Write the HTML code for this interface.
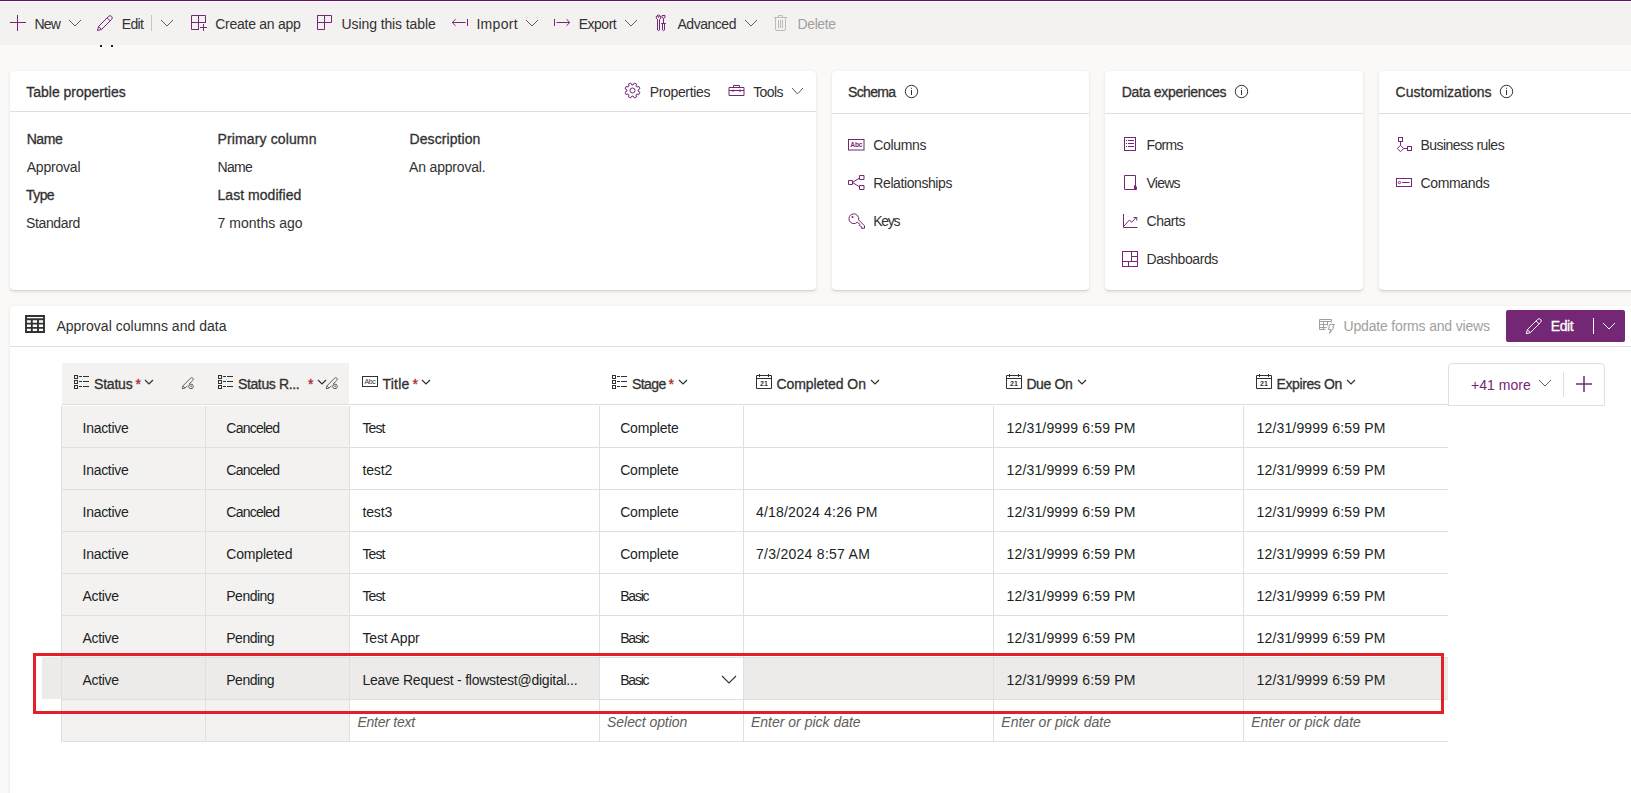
<!DOCTYPE html>
<html><head><meta charset="utf-8"><style>
html,body{margin:0;padding:0}
body{width:1631px;height:793px;overflow:hidden;position:relative;background:#faf9f8;font-family:"Liberation Sans",sans-serif;font-size:14px;color:#323130}
.t{position:absolute;line-height:16px;white-space:nowrap}
.r{position:absolute}
.i{position:absolute;overflow:visible}
.card{position:absolute;background:#fff;border-radius:4px;box-shadow:0 1.6px 3.6px rgba(0,0,0,.10),0 .3px .9px rgba(0,0,0,.08)}
</style></head><body>
<div class="r" style="left:0px;top:0px;width:1631px;height:1px;background:#661166;"></div>
<div class="r" style="left:0px;top:1px;width:1631px;height:1px;background:#fbfcfb;"></div>
<div class="r" style="left:0px;top:2px;width:1631px;height:43px;background:#f3f2f1;"></div>
<div class="r" style="left:100px;top:45px;width:2px;height:2px;background:#201f1e;"></div>
<div class="r" style="left:111px;top:45px;width:2px;height:2px;background:#201f1e;"></div>
<svg class="i" style="left:10px;top:14px" width="16" height="17" viewBox="0 0 16 17" fill="none" stroke="#742774" stroke-width="1"><path d="M0 8.5 H16 M7.5 1 V17"/></svg>
<div class="t" style="left:34.40px;top:16px;letter-spacing:-0.75px;">New</div>
<svg class="i" style="left:68px;top:19px" width="14" height="8" viewBox="0 0 14 8" fill="none" stroke="#605e5c" stroke-width="1"><path d="M1 1 L7.0 7 L13 1"/></svg>
<svg class="i" style="left:96px;top:14px" width="18" height="18" viewBox="0 0 18 18" fill="none" stroke="#742774" stroke-width="1"><path d="M1.5 16.5 L2.6 12.4 L12.6 2.4 A2.05 2.05 0 0 1 15.6 5.4 L5.6 15.4 Z M11.1 3.9 L14.1 6.9 M2.6 12.4 L5.6 15.4"/></svg>
<div class="t" style="left:121.80px;top:16px;letter-spacing:-0.667px;">Edit</div>
<div class="r" style="left:151px;top:15px;width:1px;height:16px;background:#c8c6c4;"></div>
<svg class="i" style="left:160px;top:19px" width="14" height="8" viewBox="0 0 14 8" fill="none" stroke="#605e5c" stroke-width="1"><path d="M1 1 L7.0 7 L13 1"/></svg>
<svg class="i" style="left:190px;top:14px" width="18" height="18" viewBox="0 0 18 18" fill="none" stroke="#742774" stroke-width="1"><path d="M1.5 1.5 H15.5 V9 M1.5 1.5 V15.5 H9 M8.5 1.5 V15.5 M1.5 8.5 H15.5 M10 13.5 H17 M13.5 10 V17"/></svg>
<div class="t" style="left:215.20px;top:16px;letter-spacing:-0.258px;">Create an app</div>
<svg class="i" style="left:316px;top:14px" width="18" height="18" viewBox="0 0 18 18" fill="none" stroke="#742774" stroke-width="1"><path d="M1.5 1.5 H15.5 V8.5 H1.5 Z M1.5 1.5 V15.5 H8.5 V1.5"/></svg>
<div class="t" style="left:341.60px;top:16px;letter-spacing:-0.107px;">Using this table</div>
<svg class="i" style="left:451px;top:17px" width="19" height="11" viewBox="0 0 19 11" fill="none" stroke="#742774" stroke-width="1"><path d="M1.5 5.5 H14.5 M4.6 2.2 L1.2 5.5 L4.6 8.8 M16.5 2 V9"/></svg>
<div class="t" style="left:476.40px;top:16px;letter-spacing:0.3px;">Import</div>
<svg class="i" style="left:525px;top:19px" width="14" height="8" viewBox="0 0 14 8" fill="none" stroke="#605e5c" stroke-width="1"><path d="M1 1 L7.0 7 L13 1"/></svg>
<svg class="i" style="left:553px;top:17px" width="19" height="11" viewBox="0 0 19 11" fill="none" stroke="#742774" stroke-width="1"><path d="M1.5 2 V9 M3.5 5.5 H16.5 M13.4 2.2 L16.8 5.5 L13.4 8.8"/></svg>
<div class="t" style="left:578.70px;top:16px;letter-spacing:-0.48px;">Export</div>
<svg class="i" style="left:624px;top:19px" width="14" height="8" viewBox="0 0 14 8" fill="none" stroke="#605e5c" stroke-width="1"><path d="M1 1 L7.0 7 L13 1"/></svg>
<svg class="i" style="left:654px;top:14px" width="14" height="18" viewBox="0 0 14 18" fill="none" stroke="#742774" stroke-width="1"><path d="M3.5 16 V5.5 M5.5 16 V5.5 M3.5 16 Q4.5 17.3 5.5 16 M3.5 5.5 A2.3 2.3 0 1 1 5.5 5.5 M3.3 1.2 L4.5 3.5 L5.7 1.2 M8.5 16 V9.5 M10.5 16 V9.5 M8.5 16 Q9.5 17.3 10.5 16 M7.2 9.5 H11.8 M9.5 9.5 V4.5 M8 1.5 H11 V3.5 Q9.5 5.2 8 3.5 Z"/></svg>
<div class="t" style="left:677.50px;top:16px;letter-spacing:-0.471px;">Advanced</div>
<svg class="i" style="left:744px;top:19px" width="14" height="8" viewBox="0 0 14 8" fill="none" stroke="#605e5c" stroke-width="1"><path d="M1 1 L7.0 7 L13 1"/></svg>
<svg class="i" style="left:773px;top:14px" width="16" height="18" viewBox="0 0 16 18" fill="none" stroke="#bebcba" stroke-width="1"><path d="M1 3.5 H14 M5.5 3.5 V1.5 H9.5 V3.5 M2.5 3.5 V15 Q2.5 16.5 4 16.5 H11 Q12.5 16.5 12.5 15 V3.5 M5.5 6 V14 M7.5 6 V14 M9.5 6 V14"/></svg>
<div class="t" style="left:797.60px;top:16px;color:#a19f9d;letter-spacing:-0.42px;">Delete</div>
<div class="card" style="left:10px;top:71px;width:806px;height:219px"></div>
<div class="r" style="left:10px;top:111px;width:806px;height:1px;background:#e1dfdd;"></div>
<div class="card" style="left:832px;top:71px;width:257px;height:219px"></div>
<div class="r" style="left:832px;top:113px;width:257px;height:1px;background:#e1dfdd;"></div>
<div class="card" style="left:1105px;top:71px;width:258px;height:219px"></div>
<div class="r" style="left:1105px;top:113px;width:258px;height:1px;background:#e1dfdd;"></div>
<div class="card" style="left:1379px;top:71px;width:262px;height:219px"></div>
<div class="r" style="left:1379px;top:113px;width:262px;height:1px;background:#e1dfdd;"></div>
<div class="t" style="left:26.30px;top:84px;-webkit-text-stroke:0.3px #323130;letter-spacing:-0.013px;">Table properties</div>
<svg class="i" style="left:624px;top:82px" width="17" height="17" viewBox="0 0 17 17" fill="none" stroke="#742774" stroke-width="1"><path d="M10.22 1.10 L12.52 2.05 L12.00 4.13 L12.87 5.00 L14.95 4.48 L15.90 6.78 L14.07 7.89 L14.07 9.11 L15.90 10.22 L14.95 12.52 L12.87 12.00 L12.00 12.87 L12.52 14.95 L10.22 15.90 L9.11 14.07 L7.89 14.07 L6.78 15.90 L4.48 14.95 L5.00 12.87 L4.13 12.00 L2.05 12.52 L1.10 10.22 L2.93 9.11 L2.93 7.89 L1.10 6.78 L2.05 4.48 L4.13 5.00 L5.00 4.13 L4.48 2.05 L6.78 1.10 L7.89 2.93 L9.11 2.93 Z"/><circle cx="8.5" cy="8.5" r="2.5"/></svg>
<div class="t" style="left:649.70px;top:84px;letter-spacing:-0.344px;">Properties</div>
<svg class="i" style="left:728px;top:84px" width="17" height="13" viewBox="0 0 17 13" fill="none" stroke="#742774" stroke-width="1"><path d="M1 3.5 H16 V11.5 H1 Z M5.5 3.5 V1.5 H11.5 V3.5 M1 6.5 H16 M5 5.5 V8 M12 5.5 V8"/></svg>
<div class="t" style="left:753.20px;top:84px;letter-spacing:-0.575px;">Tools</div>
<svg class="i" style="left:791px;top:87px" width="13" height="8" viewBox="0 0 13 8" fill="none" stroke="#605e5c" stroke-width="1"><path d="M1 1 L6.5 7 L12 1"/></svg>
<div class="t" style="left:26.70px;top:131px;-webkit-text-stroke:0.3px #323130;letter-spacing:-0.433px;">Name</div>
<div class="t" style="left:26.70px;top:159px;letter-spacing:-0.2px;">Approval</div>
<div class="t" style="left:26.00px;top:187px;-webkit-text-stroke:0.3px #323130;letter-spacing:-0.567px;">Type</div>
<div class="t" style="left:26.00px;top:215px;letter-spacing:-0.371px;">Standard</div>
<div class="t" style="left:217.50px;top:131px;-webkit-text-stroke:0.3px #323130;letter-spacing:0.131px;">Primary column</div>
<div class="t" style="left:217.50px;top:159px;letter-spacing:-0.7px;">Name</div>
<div class="t" style="left:217.50px;top:187px;-webkit-text-stroke:0.3px #323130;letter-spacing:0.042px;">Last modified</div>
<div class="t" style="left:217.50px;top:215px;letter-spacing:0.018px;">7 months ago</div>
<div class="t" style="left:409.50px;top:131px;-webkit-text-stroke:0.3px #323130;letter-spacing:0.08px;">Description</div>
<div class="t" style="left:409.10px;top:159px;letter-spacing:-0.191px;">An approval.</div>
<div class="t" style="left:848.00px;top:84px;-webkit-text-stroke:0.3px #323130;letter-spacing:-0.64px;">Schema</div>
<svg class="i" style="left:904px;top:84px" width="15" height="15" viewBox="0 0 15 15" fill="none" stroke="#323130" stroke-width="1"><circle cx="7.5" cy="7.5" r="6.2"/><path d="M7.5 6 V11"/><rect x="7" y="3.8" width="1" height="1" fill="#323130" stroke="none"/></svg>
<svg class="i" style="left:848px;top:138px" width="17" height="13" viewBox="0 0 17 13" fill="none" stroke="#742774" stroke-width="1"><rect x="0.5" y="1.5" width="15.5" height="10.5"/><text x="8.3" y="9.3" font-size="6.6" font-weight="700" font-family="Liberation Sans" fill="#742774" stroke="none" text-anchor="middle" letter-spacing="-0.2">Abc</text></svg>
<div class="t" style="left:873.30px;top:137px;letter-spacing:-0.35px;">Columns</div>
<svg class="i" style="left:848px;top:174px" width="17" height="17" viewBox="0 0 17 17" fill="none" stroke="#742774" stroke-width="1"><path d="M0.5 6.5 H4.5 V10.5 H0.5 Z M11.5 1.5 H16 V5.5 H11.5 Z M11.5 11.5 H16 V15.5 H11.5 Z M4.5 8.5 L11.5 4 M4.5 8.5 L11.5 12.8"/></svg>
<div class="t" style="left:873.30px;top:175px;letter-spacing:-0.408px;">Relationships</div>
<svg class="i" style="left:847px;top:212px" width="19" height="18" viewBox="0 0 19 18" fill="none" stroke="#742774" stroke-width="1"><path d="M10.3 10.2 A4.9 4.9 0 1 1 11.6 7.9 L17.5 13.8 V16.3 H14.3 L15 15.2 L12.3 13.4 L13 12.4 Z"/><circle cx="5.5" cy="5" r="1" fill="#742774" stroke="none"/></svg>
<div class="t" style="left:873.30px;top:213px;letter-spacing:-1.3px;">Keys</div>
<div class="t" style="left:1121.80px;top:84px;-webkit-text-stroke:0.3px #323130;letter-spacing:-0.287px;">Data experiences</div>
<svg class="i" style="left:1234px;top:84px" width="15" height="15" viewBox="0 0 15 15" fill="none" stroke="#323130" stroke-width="1"><circle cx="7.5" cy="7.5" r="6.2"/><path d="M7.5 6 V11"/><rect x="7" y="3.8" width="1" height="1" fill="#323130" stroke="none"/></svg>
<svg class="i" style="left:1124px;top:137px" width="13" height="14" viewBox="0 0 13 14" fill="none" stroke="#742774" stroke-width="1"><rect x="0.5" y="0.5" width="11" height="13"/><path d="M2 3.5 H3 M4 3.5 H10 M2 6.5 H3 M4 6.5 H10 M2 9.5 H3 M4 9.5 H10"/></svg>
<div class="t" style="left:1146.50px;top:137px;letter-spacing:-0.65px;">Forms</div>
<svg class="i" style="left:1124px;top:175px" width="14" height="16" viewBox="0 0 14 16" fill="none" stroke="#742774" stroke-width="1"><path d="M0.5 0.5 H11.5 V14.5 H0.5 Z M10.5 14.5 V10.5 Q12.8 11 12.5 13 V14.5 H11"/></svg>
<div class="t" style="left:1146.50px;top:175px;letter-spacing:-0.775px;">Views</div>
<svg class="i" style="left:1123px;top:213px" width="15" height="15" viewBox="0 0 15 15" fill="none" stroke="#742774" stroke-width="1"><path d="M0.5 1 V14.5 H14.5 M1 13 L6.5 7 L8.5 9.3 L13.5 4.3 M10.5 4.5 H13.8 V7.5"/></svg>
<div class="t" style="left:1146.50px;top:213px;letter-spacing:-0.46px;">Charts</div>
<svg class="i" style="left:1122px;top:251px" width="17" height="17" viewBox="0 0 17 17" fill="none" stroke="#742774" stroke-width="1"><rect x="0.5" y="0.5" width="15" height="15"/><path d="M9.5 0.5 V10.5 M0.5 10.5 H15.5 M9.5 5.5 H15.5 M6.5 10.5 V15.5"/></svg>
<div class="t" style="left:1146.50px;top:251px;letter-spacing:-0.411px;">Dashboards</div>
<div class="t" style="left:1395.60px;top:84px;-webkit-text-stroke:0.3px #323130;letter-spacing:0.023px;">Customizations</div>
<svg class="i" style="left:1499px;top:84px" width="15" height="15" viewBox="0 0 15 15" fill="none" stroke="#323130" stroke-width="1"><circle cx="7.5" cy="7.5" r="6.2"/><path d="M7.5 6 V11"/><rect x="7" y="3.8" width="1" height="1" fill="#323130" stroke="none"/></svg>
<svg class="i" style="left:1396px;top:136px" width="17" height="16" viewBox="0 0 17 16" fill="none" stroke="#742774" stroke-width="1"><rect x="2.5" y="1.5" width="4" height="4"/><path d="M4.5 5.5 V9.3 M4.5 9.3 L7.7 12.5 L4.5 15.7 L1.3 12.5 Z M7.7 12.5 H11.5"/><rect x="11.5" y="10.5" width="4" height="4"/></svg>
<div class="t" style="left:1420.40px;top:137px;letter-spacing:-0.523px;">Business rules</div>
<svg class="i" style="left:1396px;top:178px" width="17" height="10" viewBox="0 0 17 10" fill="none" stroke="#742774" stroke-width="1"><rect x="0.5" y="0.5" width="15" height="8"/><circle cx="3.5" cy="4.5" r="1.1"/><path d="M6 4.5 H13.5"/></svg>
<div class="t" style="left:1420.40px;top:175px;letter-spacing:-0.329px;">Commands</div>
<div class="card" style="left:10px;top:306px;width:1640px;height:600px"></div>
<div class="r" style="left:10px;top:346px;width:1621px;height:1px;background:#e1dfdd;"></div>
<svg class="i" style="left:25px;top:315px" width="20" height="18" viewBox="0 0 20 18" fill="none" stroke="#323130" stroke-width="1"><path d="M1 1 H19 V17 H1 Z M1 4.2 H19 M1 8.6 H19 M1 12.9 H19 M6.8 4.2 V17 M13 4.2 V17" stroke-width="1.9"/></svg>
<div class="t" style="left:56.40px;top:318px;letter-spacing:0.017px;">Approval columns and data</div>
<svg class="i" style="left:1319px;top:318px" width="17" height="17" viewBox="0 0 17 17" fill="none" stroke="#a19f9d" stroke-width="1"><path d="M0.5 1.5 H12.5 V3.5 H0.5 Z M0.5 3.5 V11.5 H6.5 M0.5 6.5 H9 M0.5 9.5 H7.5 M4.5 3.5 V11.5 M8.5 3.5 V7.5 M12.5 3.5 V4.5 M10.5 6.5 H15.5 L13.5 9 H15 L10.5 15.5 L11.8 11.5 H9.5 Z"/></svg>
<div class="t" style="left:1343.50px;top:318px;color:#a19f9d;letter-spacing:-0.176px;">Update forms and views</div>
<div class="r" style="left:1506px;top:310px;width:119px;height:32px;background:#742774;border-radius:2px"></div>
<svg class="i" style="left:1525px;top:317px" width="18" height="18" viewBox="0 0 18 18" fill="none" stroke="#ffffff" stroke-width="1"><path d="M1.3 16.7 L2.4 12.6 L12.6 2.4 A2.05 2.05 0 0 1 15.6 5.4 L5.4 15.6 Z M11.1 3.9 L14.1 6.9 M2.4 12.6 L5.4 15.6"/></svg>
<div class="t" style="left:1550.70px;top:318px;color:#ffffff;-webkit-text-stroke:0.3px #ffffff;letter-spacing:-0.367px;">Edit</div>
<div class="r" style="left:1593px;top:318px;width:1px;height:16px;background:#ffffff;"></div>
<svg class="i" style="left:1602px;top:322px" width="14" height="8" viewBox="0 0 14 8" fill="none" stroke="#ffffff" stroke-width="1"><path d="M1 1 L7.0 7 L13 1"/></svg>
<div class="r" style="left:62px;top:363px;width:287px;height:41px;background:#f3f2f1;"></div>
<div class="r" style="left:62px;top:404px;width:1386px;height:1px;background:#e1dfdd;"></div>
<div class="r" style="left:61px;top:405px;width:1387px;height:1px;background:#ffffff;"></div>
<div class="r" style="left:61px;top:406px;width:288px;height:335px;background:#f3f2f1;"></div>
<div class="r" style="left:42px;top:657px;width:1406px;height:42px;background:#edebe9;"></div>
<div class="r" style="left:600px;top:657px;width:143px;height:42px;background:#ffffff;"></div>
<div class="r" style="left:61px;top:447px;width:1387px;height:1px;background:#e1dfdd;"></div>
<div class="r" style="left:61px;top:489px;width:1387px;height:1px;background:#e1dfdd;"></div>
<div class="r" style="left:61px;top:531px;width:1387px;height:1px;background:#e1dfdd;"></div>
<div class="r" style="left:61px;top:573px;width:1387px;height:1px;background:#e1dfdd;"></div>
<div class="r" style="left:61px;top:615px;width:1387px;height:1px;background:#e1dfdd;"></div>
<div class="r" style="left:61px;top:657px;width:1387px;height:1px;background:#e1dfdd;"></div>
<div class="r" style="left:61px;top:699px;width:1387px;height:1px;background:#e1dfdd;"></div>
<div class="r" style="left:61px;top:741px;width:1387px;height:1px;background:#e1dfdd;"></div>
<div class="r" style="left:61px;top:406px;width:1px;height:336px;background:#e1dfdd;"></div>
<div class="r" style="left:205px;top:406px;width:1px;height:336px;background:#e1dfdd;"></div>
<div class="r" style="left:349px;top:406px;width:1px;height:336px;background:#e1dfdd;"></div>
<div class="r" style="left:599px;top:406px;width:1px;height:336px;background:#e1dfdd;"></div>
<div class="r" style="left:743px;top:406px;width:1px;height:336px;background:#e1dfdd;"></div>
<div class="r" style="left:993px;top:406px;width:1px;height:336px;background:#e1dfdd;"></div>
<div class="r" style="left:1243px;top:406px;width:1px;height:336px;background:#e1dfdd;"></div>
<svg class="i" style="left:74px;top:375px" width="16" height="15" viewBox="0 0 16 15" fill="none" stroke="#323130" stroke-width="1"><rect x="0.5" y="0.5" width="3" height="3"/><rect x="0.5" y="5.5" width="3" height="3"/><rect x="0.5" y="10.5" width="3" height="3"/><path d="M5 1.5 H8 M9 1.5 H15 M5 6.5 H8 M9 6.5 H15 M5 11.5 H8 M9 11.5 H15"/></svg>
<div class="t" style="left:94.00px;top:376px;-webkit-text-stroke:0.3px #323130;letter-spacing:-0.2px;">Status</div>
<div class="t" style="left:135.40px;top:376px;color:#a4262c;-webkit-text-stroke:0.3px #a4262c;">*</div>
<svg class="i" style="left:144px;top:379px" width="10" height="6" viewBox="0 0 10 6" fill="none" stroke="#323130" stroke-width="1.2"><path d="M1 1 L5.0 5 L9 1"/></svg>
<svg class="i" style="left:181px;top:376px" width="14" height="14" viewBox="0 0 14 14" fill="none" stroke="#605e5c" stroke-width="1"><path d="M1.2 12.8 L2 9.8 L9.6 2.2 A1.55 1.55 0 0 1 11.8 4.4 L8.2 8 M1.2 12.8 L4.2 12 L6.6 9.6 M2 9.8 L4.2 12"/><circle cx="10" cy="10.4" r="2.3"/><path d="M10 9.4 V10.6 H11"/></svg>
<svg class="i" style="left:218px;top:375px" width="16" height="15" viewBox="0 0 16 15" fill="none" stroke="#323130" stroke-width="1"><rect x="0.5" y="0.5" width="3" height="3"/><rect x="0.5" y="5.5" width="3" height="3"/><rect x="0.5" y="10.5" width="3" height="3"/><path d="M5 1.5 H8 M9 1.5 H15 M5 6.5 H8 M9 6.5 H15 M5 11.5 H8 M9 11.5 H15"/></svg>
<div class="t" style="left:238.00px;top:376px;-webkit-text-stroke:0.3px #323130;letter-spacing:-0.38px;">Status R...</div>
<div class="t" style="left:308.00px;top:376px;color:#a4262c;-webkit-text-stroke:0.3px #a4262c;">*</div>
<svg class="i" style="left:317px;top:379px" width="10" height="6" viewBox="0 0 10 6" fill="none" stroke="#323130" stroke-width="1.2"><path d="M1 1 L5.0 5 L9 1"/></svg>
<svg class="i" style="left:325px;top:376px" width="14" height="14" viewBox="0 0 14 14" fill="none" stroke="#605e5c" stroke-width="1"><path d="M1.2 12.8 L2 9.8 L9.6 2.2 A1.55 1.55 0 0 1 11.8 4.4 L8.2 8 M1.2 12.8 L4.2 12 L6.6 9.6 M2 9.8 L4.2 12"/><circle cx="10" cy="10.4" r="2.3"/><path d="M10 9.4 V10.6 H11"/></svg>
<svg class="i" style="left:362px;top:376px" width="17" height="12" viewBox="0 0 17 12" fill="none" stroke="#323130" stroke-width="1"><rect x="0.5" y="0.5" width="15" height="10"/><text x="8" y="8.2" font-size="7" font-family="Liberation Sans" fill="#323130" stroke="none" text-anchor="middle" letter-spacing="-0.3">Abc</text></svg>
<div class="t" style="left:382.40px;top:376px;-webkit-text-stroke:0.3px #323130;letter-spacing:0.25px;">Title</div>
<div class="t" style="left:412.50px;top:376px;color:#a4262c;-webkit-text-stroke:0.3px #a4262c;">*</div>
<svg class="i" style="left:421px;top:379px" width="10" height="6" viewBox="0 0 10 6" fill="none" stroke="#323130" stroke-width="1.2"><path d="M1 1 L5.0 5 L9 1"/></svg>
<svg class="i" style="left:612px;top:375px" width="16" height="15" viewBox="0 0 16 15" fill="none" stroke="#323130" stroke-width="1"><rect x="0.5" y="0.5" width="3" height="3"/><rect x="0.5" y="5.5" width="3" height="3"/><rect x="0.5" y="10.5" width="3" height="3"/><path d="M5 1.5 H8 M9 1.5 H15 M5 6.5 H8 M9 6.5 H15 M5 11.5 H8 M9 11.5 H15"/></svg>
<div class="t" style="left:631.90px;top:376px;-webkit-text-stroke:0.3px #323130;letter-spacing:-0.525px;">Stage</div>
<div class="t" style="left:668.60px;top:376px;color:#a4262c;-webkit-text-stroke:0.3px #a4262c;">*</div>
<svg class="i" style="left:678px;top:379px" width="10" height="6" viewBox="0 0 10 6" fill="none" stroke="#323130" stroke-width="1.2"><path d="M1 1 L5.0 5 L9 1"/></svg>
<svg class="i" style="left:756px;top:374px" width="17" height="17" viewBox="0 0 17 17" fill="none" stroke="#323130" stroke-width="1"><path d="M0.5 1.5 H15.5 V14.5 H0.5 Z M0.5 4.5 H15.5 M3.5 0 V3 M12.5 0 V3"/><text x="8" y="12.3" font-size="7" font-weight="700" font-family="Liberation Sans" fill="#323130" stroke="none" text-anchor="middle">21</text></svg>
<div class="t" style="left:776.40px;top:376px;-webkit-text-stroke:0.3px #323130;letter-spacing:-0.064px;">Completed On</div>
<svg class="i" style="left:870px;top:379px" width="10" height="6" viewBox="0 0 10 6" fill="none" stroke="#323130" stroke-width="1.2"><path d="M1 1 L5.0 5 L9 1"/></svg>
<svg class="i" style="left:1006px;top:374px" width="17" height="17" viewBox="0 0 17 17" fill="none" stroke="#323130" stroke-width="1"><path d="M0.5 1.5 H15.5 V14.5 H0.5 Z M0.5 4.5 H15.5 M3.5 0 V3 M12.5 0 V3"/><text x="8" y="12.3" font-size="7" font-weight="700" font-family="Liberation Sans" fill="#323130" stroke="none" text-anchor="middle">21</text></svg>
<div class="t" style="left:1026.40px;top:376px;-webkit-text-stroke:0.3px #323130;letter-spacing:-0.38px;">Due On</div>
<svg class="i" style="left:1077px;top:379px" width="10" height="6" viewBox="0 0 10 6" fill="none" stroke="#323130" stroke-width="1.2"><path d="M1 1 L5.0 5 L9 1"/></svg>
<svg class="i" style="left:1256px;top:374px" width="17" height="17" viewBox="0 0 17 17" fill="none" stroke="#323130" stroke-width="1"><path d="M0.5 1.5 H15.5 V14.5 H0.5 Z M0.5 4.5 H15.5 M3.5 0 V3 M12.5 0 V3"/><text x="8" y="12.3" font-size="7" font-weight="700" font-family="Liberation Sans" fill="#323130" stroke="none" text-anchor="middle">21</text></svg>
<div class="t" style="left:1276.50px;top:376px;-webkit-text-stroke:0.3px #323130;letter-spacing:-0.389px;">Expires On</div>
<svg class="i" style="left:1346px;top:379px" width="10" height="6" viewBox="0 0 10 6" fill="none" stroke="#323130" stroke-width="1.2"><path d="M1 1 L5.0 5 L9 1"/></svg>
<div class="r" style="left:1448px;top:363px;width:155px;height:41px;border:1px solid #e1dfdd;border-radius:4px 4px 0 0;background:#fff"></div>
<div class="t" style="left:1471.00px;top:377px;color:#742774;letter-spacing:0.029px;">+41 more</div>
<svg class="i" style="left:1538px;top:379px" width="14" height="8" viewBox="0 0 14 8" fill="none" stroke="#605e5c" stroke-width="1"><path d="M1 1 L7.0 7 L13 1"/></svg>
<div class="r" style="left:1563px;top:372px;width:1px;height:25px;background:#e1dfdd;"></div>
<svg class="i" style="left:1576px;top:376px" width="16" height="16" viewBox="0 0 16 16" fill="none" stroke="#742774" stroke-width="1.5"><path d="M0 8 H16 M8 0 V16"/></svg>
<div class="t" style="left:82.60px;top:420px;color:#201f1e;letter-spacing:-0.3px;">Inactive</div>
<div class="t" style="left:226.30px;top:420px;color:#201f1e;letter-spacing:-0.757px;">Canceled</div>
<div class="t" style="left:362.40px;top:420px;color:#201f1e;letter-spacing:-0.9px;">Test</div>
<div class="t" style="left:620.20px;top:420px;color:#201f1e;letter-spacing:-0.2px;">Complete</div>
<div class="t" style="left:1006.50px;top:420px;color:#201f1e;letter-spacing:0.159px;">12/31/9999 6:59 PM</div>
<div class="t" style="left:1256.50px;top:420px;color:#201f1e;letter-spacing:0.159px;">12/31/9999 6:59 PM</div>
<div class="t" style="left:82.60px;top:462px;color:#201f1e;letter-spacing:-0.3px;">Inactive</div>
<div class="t" style="left:226.30px;top:462px;color:#201f1e;letter-spacing:-0.757px;">Canceled</div>
<div class="t" style="left:362.40px;top:462px;color:#201f1e;letter-spacing:-0.1px;">test2</div>
<div class="t" style="left:620.20px;top:462px;color:#201f1e;letter-spacing:-0.2px;">Complete</div>
<div class="t" style="left:1006.50px;top:462px;color:#201f1e;letter-spacing:0.159px;">12/31/9999 6:59 PM</div>
<div class="t" style="left:1256.50px;top:462px;color:#201f1e;letter-spacing:0.159px;">12/31/9999 6:59 PM</div>
<div class="t" style="left:82.60px;top:504px;color:#201f1e;letter-spacing:-0.3px;">Inactive</div>
<div class="t" style="left:226.30px;top:504px;color:#201f1e;letter-spacing:-0.757px;">Canceled</div>
<div class="t" style="left:362.40px;top:504px;color:#201f1e;letter-spacing:-0.125px;">test3</div>
<div class="t" style="left:620.20px;top:504px;color:#201f1e;letter-spacing:-0.2px;">Complete</div>
<div class="t" style="left:756.00px;top:504px;color:#201f1e;letter-spacing:0.194px;">4/18/2024 4:26 PM</div>
<div class="t" style="left:1006.50px;top:504px;color:#201f1e;letter-spacing:0.159px;">12/31/9999 6:59 PM</div>
<div class="t" style="left:1256.50px;top:504px;color:#201f1e;letter-spacing:0.159px;">12/31/9999 6:59 PM</div>
<div class="t" style="left:82.60px;top:546px;color:#201f1e;letter-spacing:-0.3px;">Inactive</div>
<div class="t" style="left:226.30px;top:546px;color:#201f1e;letter-spacing:-0.188px;">Completed</div>
<div class="t" style="left:362.40px;top:546px;color:#201f1e;letter-spacing:-0.9px;">Test</div>
<div class="t" style="left:620.20px;top:546px;color:#201f1e;letter-spacing:-0.2px;">Complete</div>
<div class="t" style="left:756.00px;top:546px;color:#201f1e;letter-spacing:0.273px;">7/3/2024 8:57 AM</div>
<div class="t" style="left:1006.50px;top:546px;color:#201f1e;letter-spacing:0.159px;">12/31/9999 6:59 PM</div>
<div class="t" style="left:1256.50px;top:546px;color:#201f1e;letter-spacing:0.159px;">12/31/9999 6:59 PM</div>
<div class="t" style="left:82.60px;top:588px;color:#201f1e;letter-spacing:-0.36px;">Active</div>
<div class="t" style="left:226.30px;top:588px;color:#201f1e;letter-spacing:-0.517px;">Pending</div>
<div class="t" style="left:362.40px;top:588px;color:#201f1e;letter-spacing:-0.9px;">Test</div>
<div class="t" style="left:620.20px;top:588px;color:#201f1e;letter-spacing:-1.2px;">Basic</div>
<div class="t" style="left:1006.50px;top:588px;color:#201f1e;letter-spacing:0.159px;">12/31/9999 6:59 PM</div>
<div class="t" style="left:1256.50px;top:588px;color:#201f1e;letter-spacing:0.159px;">12/31/9999 6:59 PM</div>
<div class="t" style="left:82.60px;top:630px;color:#201f1e;letter-spacing:-0.36px;">Active</div>
<div class="t" style="left:226.30px;top:630px;color:#201f1e;letter-spacing:-0.517px;">Pending</div>
<div class="t" style="left:362.40px;top:630px;color:#201f1e;letter-spacing:-0.125px;">Test Appr</div>
<div class="t" style="left:620.20px;top:630px;color:#201f1e;letter-spacing:-1.2px;">Basic</div>
<div class="t" style="left:1006.50px;top:630px;color:#201f1e;letter-spacing:0.159px;">12/31/9999 6:59 PM</div>
<div class="t" style="left:1256.50px;top:630px;color:#201f1e;letter-spacing:0.159px;">12/31/9999 6:59 PM</div>
<div class="t" style="left:82.60px;top:672px;color:#201f1e;letter-spacing:-0.36px;">Active</div>
<div class="t" style="left:226.30px;top:672px;color:#201f1e;letter-spacing:-0.517px;">Pending</div>
<div class="t" style="left:362.40px;top:672px;color:#201f1e;letter-spacing:-0.24px;">Leave Request - flowstest@digital...</div>
<div class="t" style="left:620.20px;top:672px;color:#201f1e;letter-spacing:-1.2px;">Basic</div>
<div class="t" style="left:1006.50px;top:672px;color:#201f1e;letter-spacing:0.159px;">12/31/9999 6:59 PM</div>
<div class="t" style="left:1256.50px;top:672px;color:#201f1e;letter-spacing:0.159px;">12/31/9999 6:59 PM</div>
<svg class="i" style="left:721px;top:675px" width="16" height="9" viewBox="0 0 16 9" fill="none" stroke="#323130" stroke-width="1.1"><path d="M1 1 L8.0 8 L15 1"/></svg>
<div class="t" style="left:357.50px;top:714px;color:#605e5c;font-style:italic;letter-spacing:-0.256px;">Enter text</div>
<div class="t" style="left:607.10px;top:714px;color:#605e5c;font-style:italic;letter-spacing:-0.067px;">Select option</div>
<div class="t" style="left:751.00px;top:714px;color:#605e5c;font-style:italic;letter-spacing:-0.006px;">Enter or pick date</div>
<div class="t" style="left:1001.30px;top:714px;color:#605e5c;font-style:italic;letter-spacing:-0.006px;">Enter or pick date</div>
<div class="t" style="left:1251.20px;top:714px;color:#605e5c;font-style:italic;letter-spacing:-0.006px;">Enter or pick date</div>
<div class="r" style="left:33px;top:653px;width:1405px;height:55px;border:3px solid #e3202a"></div>
</body></html>
